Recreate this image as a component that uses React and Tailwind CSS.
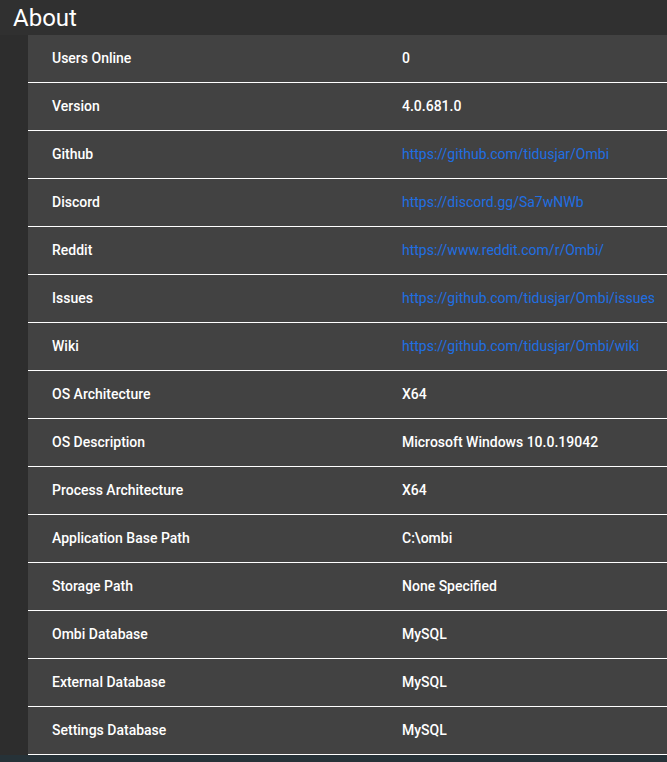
import React from 'react';

const ROWS = [
  { label: 'Users Online', value: '0' },
  { label: 'Version', value: '4.0.681.0' },
  { label: 'Github', value: 'https://github.com/tidusjar/Ombi', link: true },
  { label: 'Discord', value: 'https://discord.gg/Sa7wNWb', link: true },
  { label: 'Reddit', value: 'https://www.reddit.com/r/Ombi/', link: true },
  { label: 'Issues', value: 'https://github.com/tidusjar/Ombi/issues', link: true },
  { label: 'Wiki', value: 'https://github.com/tidusjar/Ombi/wiki', link: true },
  { label: 'OS Architecture', value: 'X64' },
  { label: 'OS Description', value: 'Microsoft Windows 10.0.19042' },
  { label: 'Process Architecture', value: 'X64' },
  { label: 'Application Base Path', value: 'C:\\ombi' },
  { label: 'Storage Path', value: 'None Specified' },
  { label: 'Ombi Database', value: 'MySQL' },
  { label: 'External Database', value: 'MySQL' },
  { label: 'Settings Database', value: 'MySQL' },
];

export default function App() {
  return (
    <div className="min-h-[762px] bg-[#263238] font-['Roboto',sans-serif] overflow-hidden">
      <div className="h-[35px] bg-[#303030] flex items-center pl-[13px]">
        <h1 className="text-[24px] text-white leading-none">About</h1>
      </div>

      <div className="flex bg-[#2d2d2d]">
        <div className="w-[28px] shrink-0" />
        {/* settings table */}
        <div className="flex-1 bg-[#424242]">
          {ROWS.map(row => (
            <div
              key={row.label}
              className="h-[48px] grid grid-cols-[374px_1fr] items-center border-b border-white text-[14px] font-medium text-white"
            >
              <span className="pl-[24px]">{row.label}</span>
              {row.link ? (
                <a href="#" className="text-[#1f6fe3] font-normal whitespace-nowrap">{row.value}</a>
              ) : (
                <span className="whitespace-nowrap">{row.value}</span>
              )}
            </div>
          ))}
        </div>
      </div>
    </div>
  );
}
